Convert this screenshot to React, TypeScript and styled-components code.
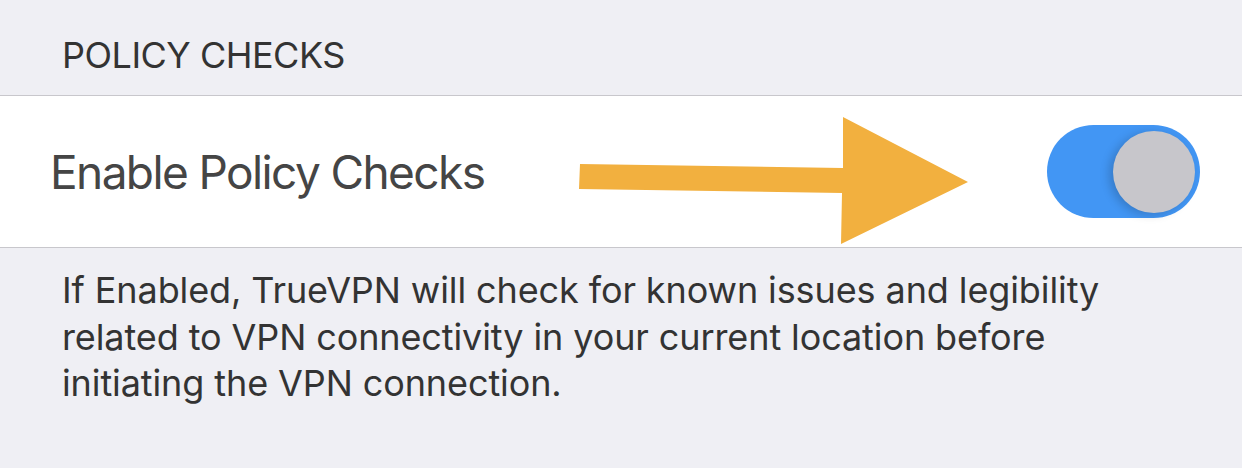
import styled, { createGlobalStyle } from 'styled-components';

const GlobalStyle = createGlobalStyle`
  html, body {
    margin: 0;
    padding: 0;
    background: #efeff4;
  }
  body {
    font-family: Inter, "Noto Sans", sans-serif;
    -webkit-font-smoothing: antialiased;
  }
`;

const Screen = styled.div`
  width: 1242px;
  height: 468px;
  background: #efeff4;
  overflow: hidden;
`;

const SectionHeader = styled.div`
  height: 95px;
  box-sizing: border-box;
  padding: 33px 62px 0;
  font-size: 36px;
  line-height: 44px;
  color: #333333;
  letter-spacing: -0.5px;
`;

const Row = styled.div`
  position: relative;
  height: 153px;
  box-sizing: border-box;
  background: #ffffff;
  border-top: 1px solid #c8c7cc;
  border-bottom: 1px solid #c8c7cc;
  display: flex;
  align-items: center;
  justify-content: space-between;
  padding: 0 42px 0 50px;
`;

const Label = styled.span`
  font-size: 46px;
  color: #454545;
  letter-spacing: -1.6px;
`;

const Switch = styled.div<{ $on: boolean }>`
  width: 153px;
  height: 93px;
  border-radius: 47px;
  background: ${p => (p.$on ? '#4296f4' : '#e5e5ea')};
  display: flex;
  align-items: center;
  justify-content: ${p => (p.$on ? 'flex-end' : 'flex-start')};
  padding: 0 5px;
  box-sizing: border-box;
`;

const Knob = styled.div`
  width: 82px;
  height: 82px;
  border-radius: 50%;
  background: #c7c6cb;
  box-shadow: -4px 2px 10px rgba(0, 0, 0, 0.18);
`;

// callout arrow pointing at the switch
const Arrow = styled.svg`
  position: absolute;
  left: 578px;
  top: 20px;
  pointer-events: none;
`;

const Footer = styled.p`
  margin: 0;
  padding: 19px 62px 0;
  font-size: 36px;
  line-height: 46.5px;
  color: #333333;
  letter-spacing: -0.1px;
`;

export default function App() {
  return (
    <Screen>
      <GlobalStyle />
      <SectionHeader>POLICY CHECKS</SectionHeader>
      <Row>
        <Label>Enable Policy Checks</Label>
        <Switch $on>
          <Knob />
        </Switch>
        <Arrow width="400" height="140" viewBox="578 116 400 140">
          <polygon
            points="580,164 843,168 843,117 968,182 841,244 842,193 579,189"
            fill="#f2b03f"
          />
        </Arrow>
      </Row>
      <Footer>
        If Enabled, TrueVPN will check for known issues and legibility
        <br />
        related to VPN connectivity in your current location before
        <br />
        initiating the VPN connection.
      </Footer>
    </Screen>
  );
}
